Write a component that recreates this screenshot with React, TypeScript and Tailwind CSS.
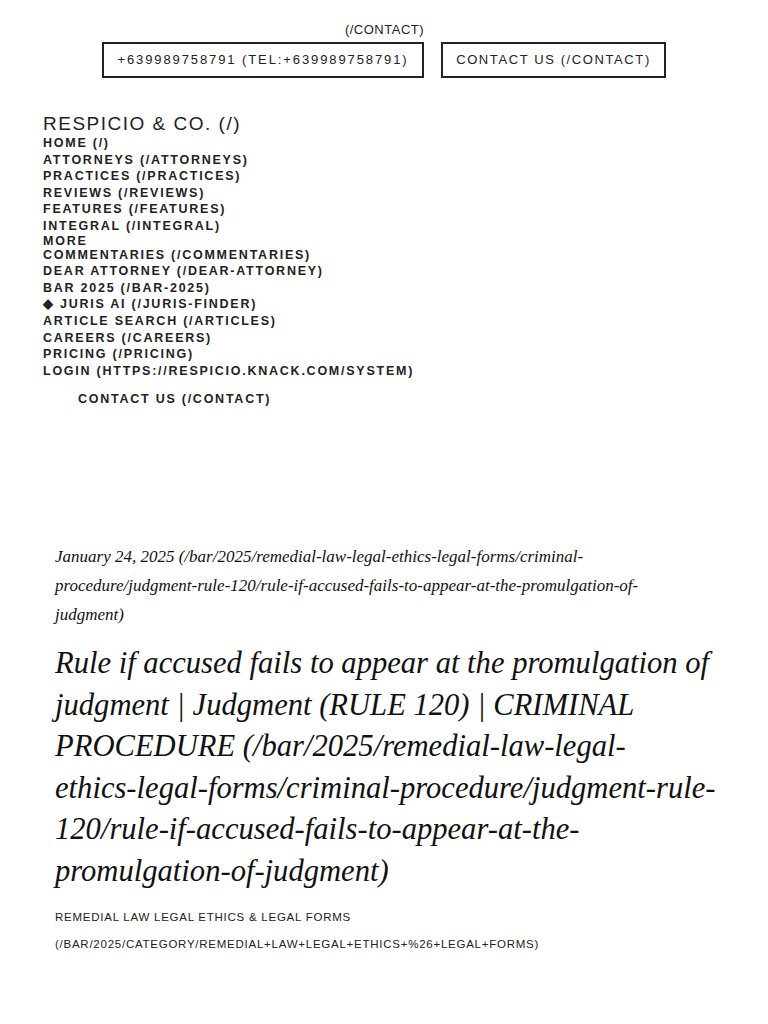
import React from "react";

const navItems = [
  "HOME (/)",
  "ATTORNEYS (/ATTORNEYS)",
  "PRACTICES (/PRACTICES)",
  "REVIEWS (/REVIEWS)",
  "FEATURES (/FEATURES)",
  "INTEGRAL (/INTEGRAL)",
];
const moreItems = [
  "COMMENTARIES (/COMMENTARIES)",
  "DEAR ATTORNEY (/DEAR-ATTORNEY)",
  "BAR 2025 (/BAR-2025)",
  "◆ JURIS AI (/JURIS-FINDER)",
  "ARTICLE SEARCH (/ARTICLES)",
  "CAREERS (/CAREERS)",
  "PRICING (/PRICING)",
  "LOGIN (HTTPS://RESPICIO.KNACK.COM/SYSTEM)",
];

export default function App() {
  return (
    <div className="bg-white text-[#111] min-h-[1024px] w-[768px]">
      <header className="flex flex-col items-center pt-[22px]">
        <div className="text-[13px] leading-[16px] tracking-[0.5px] font-['Liberation_Sans',sans-serif] text-[#222] pl-[1px]">(/CONTACT)</div>
        <div className="flex gap-[17px] mt-[4px]">
          <div className="border-2 border-[#222] h-[36px] w-[322px] flex items-center justify-center text-[13px] tracking-[1.9px] font-['Liberation_Sans',sans-serif] text-[#222]">
            +639989758791 (TEL:+639989758791)
          </div>
          <div className="border-2 border-[#222] h-[36px] w-[225px] flex items-center justify-center text-[13px] tracking-[1.6px] font-['Liberation_Sans',sans-serif] text-[#222]">
            CONTACT US (/CONTACT)
          </div>
        </div>
      </header>

      <nav className="pl-[43px] mt-[35px] font-['Liberation_Sans',sans-serif]">
        <div className="text-[19px] leading-[22px] tracking-[1.5px] text-[#222]">RESPICIO &amp; CO. (/)</div>
        <ul className="text-[12.5px] font-bold tracking-[1.75px] leading-[16.6px] text-[#222]">
          {navItems.map((t) => (
            <li key={t}>{t}</li>
          ))}
          <li className="leading-[12px]">MORE</li>
          {moreItems.map((t) => (
            <li key={t}>{t}</li>
          ))}
        </ul>
        <div className="pl-[35px] mt-[12px] text-[12.5px] font-bold tracking-[1.75px] leading-[16px] text-[#222]">
          CONTACT US (/CONTACT)
        </div>
      </nav>

      <main className="px-[55px] mt-[135px] font-['Liberation_Serif',serif] italic text-[#111]">
        <div className="text-[17px] leading-[29px] whitespace-nowrap">
          <span className="block">January 24, 2025 (/bar/2025/remedial-law-legal-ethics-legal-forms/criminal-</span>
          <span className="block">procedure/judgment-rule-120/rule-if-accused-fails-to-appear-at-the-promulgation-of-</span>
          <span className="block">judgment)</span>
        </div>
        <h1 className="mt-[14px] text-[30.6px] leading-[41.5px] font-normal whitespace-nowrap">
          <span className="block">Rule if accused fails to appear at the promulgation of</span>
          <span className="block">judgment | Judgment (RULE 120) | CRIMINAL</span>
          <span className="block">PROCEDURE (/bar/2025/remedial-law-legal-</span>
          <span className="block">ethics-legal-forms/criminal-procedure/judgment-rule-</span>
          <span className="block">120/rule-if-accused-fails-to-appear-at-the-</span>
          <span className="block">promulgation-of-judgment)</span>
        </h1>
        <div className="mt-[12px] not-italic font-['Liberation_Sans',sans-serif] text-[11.5px] tracking-[0.75px] leading-[27px] text-[#222]">
          <span className="block">REMEDIAL LAW LEGAL ETHICS &amp; LEGAL FORMS</span>
          <span className="block">(/BAR/2025/CATEGORY/REMEDIAL+LAW+LEGAL+ETHICS+%26+LEGAL+FORMS)</span>
        </div>
      </main>
    </div>
  );
}
